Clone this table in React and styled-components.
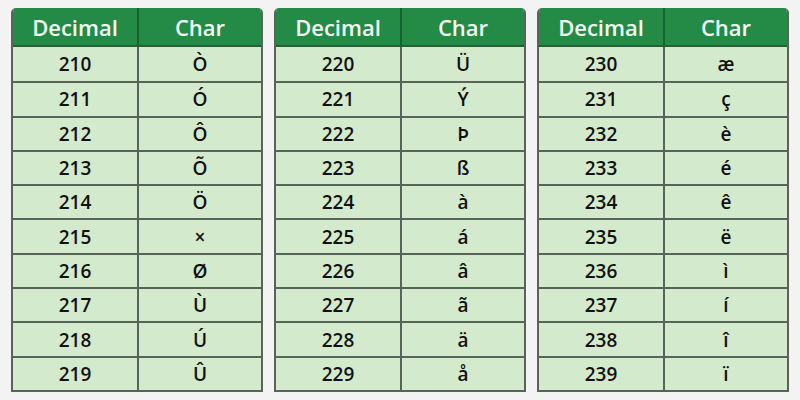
import React from "react";
import styled, { createGlobalStyle } from "styled-components";

const GlobalStyle = createGlobalStyle`
  html, body {
    margin: 0;
    padding: 0;
    background: #f3f3f3;
  }
  body {
    font-family: "Open Sans", "Noto Sans", sans-serif;
  }
`;

const Page = styled.div`
  display: flex;
  gap: 11px;
  padding: 8px 11px;
  width: 800px;
  height: 400px;
  box-sizing: border-box;
`;

const Table = styled.div`
  flex: 1;
  display: grid;
  grid-template-columns: 1fr 1fr;
  grid-template-rows: 39px repeat(10, 1fr);
  height: 382px;
  border: 2px solid #56645a;
  border-top: none;
  border-radius: 5px 5px 0 0;
  overflow: hidden;
  background: #d4eacd;
`;

const HeadCell = styled.div`
  display: flex;
  align-items: center;
  justify-content: center;
  background: #238b45;
  color: #f4fbf4;
  font-size: 22px;
  font-weight: 600;
  border-left: ${(p) => (p.$first ? "none" : "2px solid #17632f")};
  border-bottom: 2px solid #2f5a3a;
`;

const Cell = styled.div`
  display: flex;
  align-items: center;
  justify-content: center;
  color: #111;
  font-size: 19px;
  font-weight: 600;
  border-left: ${(p) => (p.$first ? "none" : "2px solid #56645a")};
  border-top: ${(p) => (p.$top ? "none" : "2px solid #56645a")};
`;

const groups = [210, 220, 230];

const CharTable = ({ start }) => {
  const rows = Array.from({ length: 10 }, (_, i) => start + i);
  return (
    <Table>
      <HeadCell $first>Decimal</HeadCell>
      <HeadCell>Char</HeadCell>
      {rows.map((n, i) => (
        <React.Fragment key={n}>
          <Cell $first $top={i === 0}>{n}</Cell>
          <Cell $top={i === 0}>{String.fromCharCode(n)}</Cell>
        </React.Fragment>
      ))}
    </Table>
  );
};

const App = () => (
  <>
    <GlobalStyle />
    <Page>
      {groups.map((g) => (
        <CharTable key={g} start={g} />
      ))}
    </Page>
  </>
);

export default App;
